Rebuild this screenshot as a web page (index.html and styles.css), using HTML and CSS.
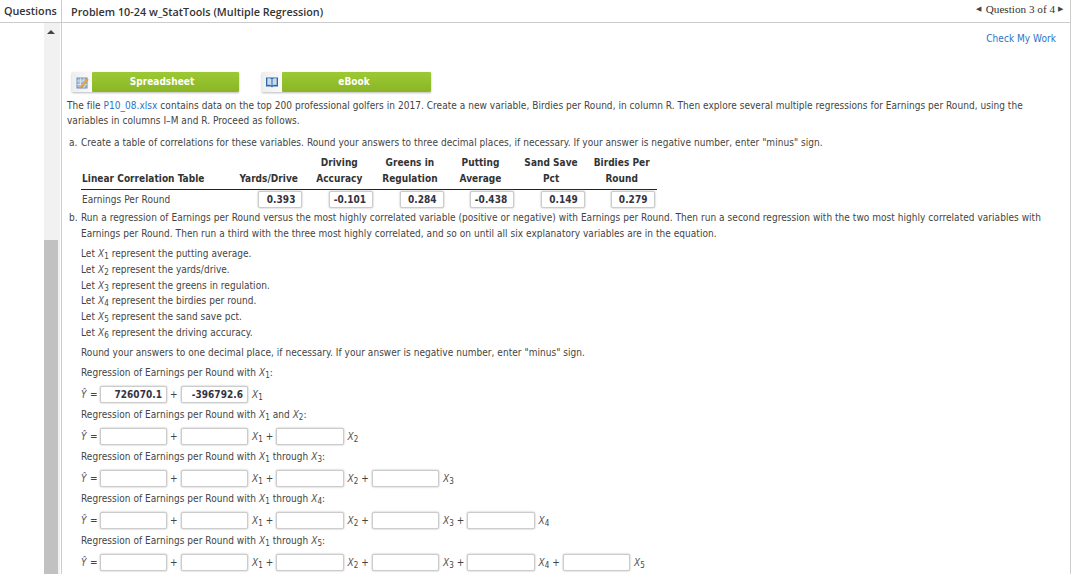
FILE: index.html
```html
<!DOCTYPE html>
<html lang="en">
<head>
<meta charset="utf-8">
<title>Problem 10-24</title>
<link rel="stylesheet" href="styles.css">
</head>
<body>
<div class="app">
  <header class="top">
    <div class="tab-q">Questions</div>
    <div class="title">Problem 10-24 w_StatTools (Multiple Regression)</div>
    <div class="pager"><span class="arr arr-l">◀</span><span>Question 3 of 4</span><span class="arr arr-r">▶</span></div>
  </header>
  <div class="body">
    <aside class="side">
      <div class="scroll">
        <div class="scroll-up"></div>
        <div class="thumb"></div>
      </div>
    </aside>
    <main class="main">
      <div class="check-row"><a class="link">Check My Work</a></div>
      <div class="btns">
        <div class="btn btn-sheet">
          <span class="btn-ic"><svg width="13" height="13" viewBox="0 0 13 13"><rect x="1" y="2" width="10" height="10" fill="#a9bfdc" stroke="#6f8db8"/><path d="M1 5h10M1 8.500h10M4.500 2v10M8 2v10" stroke="#e4ecf6" stroke-width=".7"/><path d="M4.500 10l6-7.500 1.800 1.200-6 7.500-2.300.6z" fill="#e6ad45" stroke="#b9802a" stroke-width=".4"/></svg></span>
          <span class="btn-label lab-s">Spreadsheet</span>
        </div>
        <div class="btn btn-book">
          <span class="btn-ic"><svg width="14" height="13" viewBox="0 0 14 13"><path d="M1 1.500h12v9H8l-1 1-1-1H1z" fill="#2c6aa6"/><path d="M2.300 2.500c1.700-.5 3.200-.3 4.200.5v6.500c-1-.7-2.500-.9-4.200-.5zM11.700 2.500c-1.700-.5-3.200-.3-4.200.5v6.500c1-.7 2.500-.9 4.200-.5z" fill="#c9dcef"/></svg></span>
          <span class="btn-label lab-b">eBook</span>
        </div>
      </div>
      <p class="intro">The file <a class="link">P10_08.xlsx</a> contains data on the top 200 professional golfers in 2017. Create a new variable, Birdies per Round, in column R. Then explore several multiple regressions for Earnings per Round, using the variables in columns I–M and R. Proceed as follows.</p>
      <p class="part-a"><span class="mark">a.</span>Create a table of correlations for these variables. Round your answers to three decimal places, if necessary. If your answer is negative number, enter "minus" sign.</p>
      <table class="corr">
        <thead>
          <tr><th class="first">Linear Correlation Table</th><th>Yards/Drive</th><th>Driving<br>Accuracy</th><th>Greens in<br>Regulation</th><th>Putting<br>Average</th><th>Sand Save<br>Pct</th><th>Birdies Per<br>Round</th></tr>
        </thead>
        <tbody>
          <tr><td class="first">Earnings Per Round</td><td><span class="box val">0.393</span></td><td><span class="box val">-0.101</span></td><td><span class="box val">0.284</span></td><td><span class="box val">-0.438</span></td><td><span class="box val">0.149</span></td><td><span class="box val">0.279</span></td></tr>
        </tbody>
      </table>
      <div class="part-b">
        <p class="b-text"><span class="mark">b.</span>Run a regression of Earnings per Round versus the most highly correlated variable (positive or negative) with Earnings per Round. Then run a second regression with the two most highly correlated variables with Earnings per Round. Then run a third with the three most highly correlated, and so on until all six explanatory variables are in the equation.</p>
        <ul class="lets">
          <li>Let <i>X</i><sub>1</sub> represent the putting average.</li>
          <li>Let <i>X</i><sub>2</sub> represent the yards/drive.</li>
          <li>Let <i>X</i><sub>3</sub> represent the greens in regulation.</li>
          <li>Let <i>X</i><sub>4</sub> represent the birdies per round.</li>
          <li>Let <i>X</i><sub>5</sub> represent the sand save pct.</li>
          <li>Let <i>X</i><sub>6</sub> represent the driving accuracy.</li>
        </ul>
        <p class="round">Round your answers to one decimal place, if necessary. If your answer is negative number, enter "minus" sign.</p>
        <p class="reg">Regression of Earnings per Round with <i>X</i><sub>1</sub>:</p>
        <div class="eq"><i class="yhat">Ŷ</i><span class="eqs">=</span><span class="box inp val">726070.1</span><span class="plus">+</span><span class="box inp val">-396792.6</span><span class="x"><i>X</i><sub>1</sub></span></div>
        <p class="reg">Regression of Earnings per Round with <i>X</i><sub>1</sub> and <i>X</i><sub>2</sub>:</p>
        <div class="eq"><i class="yhat">Ŷ</i><span class="eqs">=</span><span class="box inp"></span><span class="plus">+</span><span class="box inp"></span><span class="x"><i>X</i><sub>1</sub> +</span><span class="box inp"></span><span class="x"><i>X</i><sub>2</sub></span></div>
        <p class="reg">Regression of Earnings per Round with <i>X</i><sub>1</sub> through <i>X</i><sub>3</sub>:</p>
        <div class="eq"><i class="yhat">Ŷ</i><span class="eqs">=</span><span class="box inp"></span><span class="plus">+</span><span class="box inp"></span><span class="x"><i>X</i><sub>1</sub> +</span><span class="box inp"></span><span class="x"><i>X</i><sub>2</sub> +</span><span class="box inp"></span><span class="x"><i>X</i><sub>3</sub></span></div>
        <p class="reg">Regression of Earnings per Round with <i>X</i><sub>1</sub> through <i>X</i><sub>4</sub>:</p>
        <div class="eq"><i class="yhat">Ŷ</i><span class="eqs">=</span><span class="box inp"></span><span class="plus">+</span><span class="box inp"></span><span class="x"><i>X</i><sub>1</sub> +</span><span class="box inp"></span><span class="x"><i>X</i><sub>2</sub> +</span><span class="box inp"></span><span class="x"><i>X</i><sub>3</sub> +</span><span class="box inp"></span><span class="x"><i>X</i><sub>4</sub></span></div>
        <p class="reg">Regression of Earnings per Round with <i>X</i><sub>1</sub> through <i>X</i><sub>5</sub>:</p>
        <div class="eq"><i class="yhat">Ŷ</i><span class="eqs">=</span><span class="box inp"></span><span class="plus">+</span><span class="box inp"></span><span class="x"><i>X</i><sub>1</sub> +</span><span class="box inp"></span><span class="x"><i>X</i><sub>2</sub> +</span><span class="box inp"></span><span class="x"><i>X</i><sub>3</sub> +</span><span class="box inp"></span><span class="x"><i>X</i><sub>4</sub> +</span><span class="box inp"></span><span class="x"><i>X</i><sub>5</sub></span></div>
      </div>
    </main>
  </div>
</div>
</body>
</html>
```
FILE: styles.css
```css
* { box-sizing: border-box; }
html, body { margin: 0; height: 100%; overflow: hidden; background: #fff; }
body { font-family: "DejaVu Sans Condensed", "DejaVu Sans", sans-serif; font-stretch: condensed; font-size: 10px; letter-spacing: .04px; color: #444; }
p { margin: 0; }
.app { width: 1071px; height: 574px; display: flex; flex-direction: column; border-right: 1px solid #ccc; }
.top { height: 23px; flex: none; display: flex; align-items: center; border-bottom: 1px solid #ccc; font-family: "Open Sans", sans-serif; font-stretch: normal; letter-spacing: 0; font-weight: 600; font-size: 10.800px; color: #333; }
.tab-q { width: 62px; height: 22px; padding-left: 4px; line-height: 21px; border-right: 1px solid #ccc; flex: none; }
.title { padding-left: 9px; flex: 1; }
.pager { display: flex; align-items: center; font-family: "Liberation Serif", serif; font-weight: 400; font-size: 11.200px; padding: 0 7px 4px 0; color: #333; }
.arr { font-size: 7px; color: #444; }
.arr-l { margin-right: 5px; }
.arr-r { margin-left: 3px; }
.body { flex: 1; display: flex; min-height: 0; }
.side { width: 62px; flex: none; padding-left: 44px; border-right: 1px solid #ccc; }
.scroll { width: 16px; height: 100%; background: #f1f1f1; display: flex; flex-direction: column; }
.scroll-up { height: 217px; position: relative; flex: none; }
.scroll-up::before { content: ""; position: absolute; left: 3px; top: 7px; border: 4px solid transparent; border-top: 0; border-bottom: 4px solid #444; }
.thumb { flex: 1; background: #c1c1c1; margin-right: 2px; }
.main { flex: 1; padding-left: 5px; overflow: hidden; min-width: 0; }
.link { color: #2a75c7; }
.check-row { text-align: right; padding: 10px 14px 0 0; line-height: 12px; }
.btns { display: flex; gap: 23px; margin-top: 27px; padding-left: 5px; }
.btn { display: flex; width: 167px; height: 20px; box-shadow: 0 1px 2px #bbb; }
.btn-book { width: 169px; }
.btn-ic { width: 20px; flex: none; background: linear-gradient(90deg, #eee, #fafafa); display: flex; align-items: center; justify-content: center; }
.btn-label { flex: 1; background: linear-gradient(#9cc933, #8ab626); color: #fff; font-weight: 700; text-align: center; line-height: 19px; border-radius: 1px; }
.lab-s { padding-right: 7px; }
.lab-b { padding-right: 5px; }
.intro { width: 965px; line-height: 15px; margin-top: 6px; }
.part-a { margin: 7px 0 0 2px; line-height: 15px; }
.mark { display: inline-block; width: 12px; text-indent: 0; }
.corr { border-collapse: collapse; table-layout: fixed; width: 576px; margin: 5px 0 0 14px; }
.corr th { font-weight: 700; color: #333; text-align: center; padding: 0 0 2px; line-height: 16px; vertical-align: bottom; border-bottom: 1px solid #222; white-space: nowrap; }
.corr th.first, .corr td.first { text-align: left; padding-left: 1px; width: 152.400px; }
.corr td { padding: 1px 1.500px 0 0; text-align: right; }
.corr td:last-child { padding-right: 2.500px; }
.box { display: inline-block; background: #fff; border: 1px solid #ccc; border-radius: 2px; box-shadow: 0 0 2px #aaa; height: 17px; vertical-align: top; }
.val { font-weight: 700; color: #334; text-align: right; padding-right: 4px; line-height: 16px; }
.corr .box { width: 44px; padding-right: 6px; }
.part-b { margin: 2px 0 0 14px; }
.b-text { width: 970px; line-height: 16px; text-indent: -12px; }
.lets { list-style: none; margin: 4px 0 0; padding: 0; }
.lets li { line-height: 15.800px; }
sub { font-size: 8px; line-height: 0; vertical-align: -2px; }
i { color: #555; }
.round { margin: 4px 0 6px; line-height: 15px; }
.reg { line-height: 14px; margin-top: 4px; }
.eq { display: flex; align-items: center; height: 19px; margin-top: 5px; white-space: nowrap; }
.eq .yhat { width: 9px; flex: none; }
.eqs { width: 9.500px; flex: none; }
.inp { width: 67.500px; flex: none; height: 17px; }
.plus { width: 13.500px; text-align: center; flex: none; }
.x { padding-left: 4px; width: 28px; flex: none; }
```
